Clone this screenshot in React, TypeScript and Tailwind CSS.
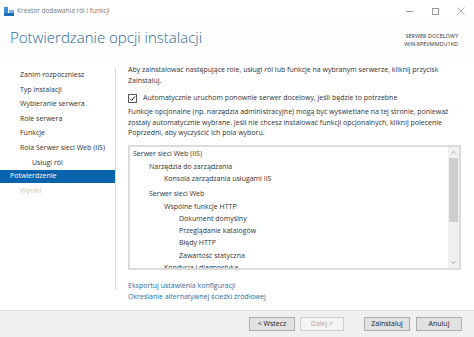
import React from "react";

const nav = [
  { t: "Zanim rozpoczniesz", indent: false },
  { t: "Typ instalacji", indent: false },
  { t: "Wybieranie serwera", indent: false },
  { t: "Role serwera", indent: false },
  { t: "Funkcje", indent: false },
  { t: "Rola Serwer sieci Web (IIS)", indent: false },
  { t: "Usługi ról", indent: true },
];

const tree: [string, number][] = [
  ["Serwer sieci Web (IIS)", 0],
  ["Narzędzia do zarządzania", 1],
  ["Konsola zarządzania usługami IIS", 2],
  ["Serwer sieci Web", 1],
  ["Wspólne funkcje HTTP", 2],
  ["Dokument domyślny", 3],
  ["Przeglądanie katalogów", 3],
  ["Błędy HTTP", 3],
  ["Zawartość statyczna", 3],
  ["Kondycja i diagnostyka", 2],
];

export default function App() {
  return (
    <div
      className="w-[474px] h-[337px] bg-white flex flex-col overflow-hidden text-[#333]"
      style={{ fontFamily: '"Open Sans", "Noto Sans", sans-serif' }}
    >
      {/* title bar */}
      <div className="h-[22px] flex items-center pl-[4px] shrink-0">
        <svg width="10" height="10" viewBox="0 0 10 10" className="mr-[3px]">
          <rect x="0" y="1" width="4" height="6" fill="#3a8fd6" />
          <rect x="0" y="7" width="10" height="3" fill="#1c6fb8" />
          <rect x="5" y="4" width="5" height="3" fill="#6fb3e8" />
        </svg>
        <span className="text-[6.5px] text-[#777]">Kreator dodawania ról i funkcji</span>
        <div className="ml-auto flex items-center h-full text-[#999]">
          <div className="w-[26px] flex justify-center">
            <div className="w-[7px] h-px bg-[#999]" />
          </div>
          <div className="w-[26px] flex justify-center">
            <div className="w-[7px] h-[7px] border border-[#999]" />
          </div>
          <div className="w-[26px] flex justify-center">
            <svg width="8" height="8" viewBox="0 0 8 8">
              <path d="M0.5 0.5 L7.5 7.5 M7.5 0.5 L0.5 7.5" stroke="#999" strokeWidth="0.8" />
            </svg>
          </div>
        </div>
      </div>

      {/* header */}
      <div className="h-[38px] flex items-start shrink-0 bg-[#fdfdfd]">
        <div className="pl-[10px] pt-[8px] text-[15px] font-light text-[#2b6a9a] leading-none">
          Potwierdzanie opcji instalacji
        </div>
        <div className="ml-auto pr-[16px] pt-[10px] text-right text-[5.5px] leading-[8px] text-[#333]">
          <div>SERWER DOCELOWY</div>
          <div>WIN-8PEVMMDU1KD</div>
        </div>
      </div>

      {/* body */}
      <div className="flex flex-1 min-h-0">
        <div className="w-[116px] shrink-0 pt-[8px] pb-[20px] flex flex-col">
          <div className="flex-1 border-r border-[#d8d8d8] flex flex-col text-[7px]">
            {nav.map((n) => (
              <div
                key={n.t}
                className={`h-[14.6px] flex items-center ${n.indent ? "pl-[32px]" : "pl-[20px]"}`}
              >
                {n.t}
              </div>
            ))}
            <div className="h-[13px] flex items-center pl-[10px] bg-[#0a64ad] text-white">
              Potwierdzenie
            </div>
            <div className="h-[16px] flex items-center pl-[20px] text-[#c8c8c8]">Wyniki</div>
          </div>
        </div>

        <div className="flex-1 pl-[12px] pr-[13px] pt-[5px] text-[7px] leading-[10.5px]">
          <p>
            Aby zainstalować następujące role, usługi ról lub funkcje na wybranym serwerze, kliknij przycisk
            Zainstaluj.
          </p>
          <div className="flex items-center mt-[7px] h-[11px]">
            <div className="w-[9px] h-[9px] border border-[#555] flex items-center justify-center mr-[6px] bg-white">
              <svg width="7" height="7" viewBox="0 0 7 7">
                <path d="M1 3.6 L2.8 5.4 L6 1.4" stroke="#222" strokeWidth="1" fill="none" />
              </svg>
            </div>
            <span>Automatycznie uruchom ponownie serwer docelowy, jeśli będzie to potrzebne</span>
          </div>
          <p className="mt-[3px]">
            Funkcje opcjonalne (np. narzędzia administracyjne) mogą być wyświetlane na tej stronie, ponieważ
            zostały automatycznie wybrane. Jeśli nie chcesz instalować funkcji opcjonalnych, kliknij polecenie
            Poprzedni, aby wyczyścić ich pola wyboru.
          </p>

          <div className="mt-[6px] h-[125px] border-[2px] border-[#dcdcdc] bg-white flex overflow-hidden">
            <div className="flex-1 pl-[3px] pt-[2px] overflow-hidden">
              {tree.map(([t, lvl], i) => (
                <div
                  key={t}
                  className={`h-[12.3px] flex items-center whitespace-nowrap ${i === 3 ? "mt-[3px]" : ""} ${
                    lvl === 0 ? "pl-0" : lvl === 1 ? "pl-[16px]" : lvl === 2 ? "pl-[31px]" : "pl-[46px]"
                  }`}
                >
                  {t}
                </div>
              ))}
            </div>
            <div className="w-[11px] bg-[#f0f0f0] flex flex-col items-center">
              <div className="h-[11px] flex items-center justify-center">
                <svg width="5" height="3" viewBox="0 0 5 3">
                  <path d="M0.5 2.5 L2.5 0.5 L4.5 2.5" stroke="#888" strokeWidth="0.7" fill="none" />
                </svg>
              </div>
              <div className="w-[9px] h-[64px] bg-[#cdcdcd]" />
              <div className="flex-1" />
              <div className="h-[11px] flex items-center justify-center">
                <svg width="5" height="3" viewBox="0 0 5 3">
                  <path d="M0.5 0.5 L2.5 2.5 L4.5 0.5" stroke="#888" strokeWidth="0.7" fill="none" />
                </svg>
              </div>
            </div>
          </div>

          <div className="mt-[10px] text-[#1f6fa5] leading-[11px]">
            <div>Eksportuj ustawienia konfiguracji</div>
            <div>Określanie alternatywnej ścieżki źródłowej</div>
          </div>
        </div>
      </div>

      {/* footer */}
      <div className="h-[27px] shrink-0 bg-[#f0f0f0] border-t border-[#e2e2e2] flex items-center justify-end pr-[12px] text-[7px]">
        <button className="w-[46px] h-[14px] border border-[#adadad] bg-[#e1e1e1] text-[#222] flex items-center justify-center">
          &lt; Wstecz
        </button>
        <button className="w-[44px] h-[14px] border border-[#d0d0d0] bg-[#f4f4f4] text-[#a8a8a8] flex items-center justify-center ml-[5px]">
          Dalej &gt;
        </button>
        <button className="w-[46px] h-[14px] border border-[#adadad] bg-[#e1e1e1] text-[#222] flex items-center justify-center ml-[20px]">
          Zainstaluj
        </button>
        <button className="w-[46px] h-[14px] border border-[#adadad] bg-[#e1e1e1] text-[#222] flex items-center justify-center ml-[6px]">
          Anuluj
        </button>
      </div>
    </div>
  );
}
